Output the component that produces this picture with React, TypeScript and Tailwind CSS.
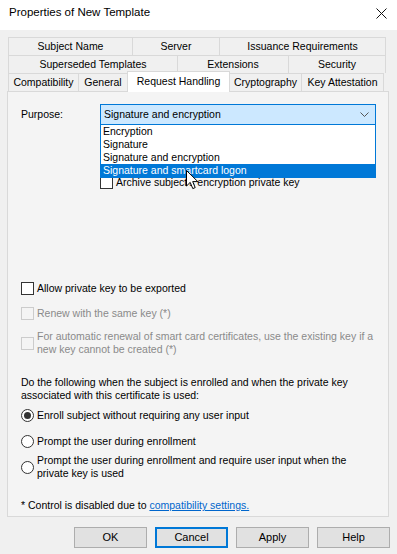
import React from 'react';

const tabRow1 = [
  { label: 'Subject Name', w: 'w-[125px]' },
  { label: 'Server', w: 'w-[88px]' },
  { label: 'Issuance Requirements', w: 'w-[167px]' },
];

const tabRow2 = [
  { label: 'Superseded Templates', w: 'w-[170px]' },
  { label: 'Extensions', w: 'w-[112px]' },
  { label: 'Security', w: 'w-[98px]' },
];

const tabRow3 = [
  { label: 'Compatibility', w: 'w-[71px]' },
  { label: 'General', w: 'w-[50px]' },
  { label: 'Request Handling', w: 'w-[103px]', active: true },
  { label: 'Cryptography', w: 'w-[73px]' },
  { label: 'Key Attestation', w: 'w-[83px]' },
];

const purposes = ['Encryption', 'Signature', 'Signature and encryption', 'Signature and smartcard logon'];

type Tab = { label: string; w: string; active?: boolean };

const TabRow: React.FC<{ tabs: Tab[] }> = ({ tabs }) => (
  <div className="flex h-[18px] items-end">
    {tabs.map((t, i) =>
      t.active ? (
        <div
          key={t.label}
          className={`${t.w} relative z-10 -mb-px -ml-px h-[21px] shrink-0 border border-b-0 border-[#d9d9d9] bg-white pt-[2px] text-center leading-[14px]`}
        >
          {t.label}
        </div>
      ) : (
        <div
          key={t.label}
          className={`${t.w} ${i > 0 ? '-ml-px' : ''} h-[18px] shrink-0 border border-b-0 border-[#d9d9d9] bg-[#f0f0f0] text-center leading-[17px]`}
        >
          {t.label}
        </div>
      )
    )}
  </div>
);

const CheckBox: React.FC<{ disabled?: boolean }> = ({ disabled }) => (
  <span
    className={`inline-block h-[13px] w-[13px] shrink-0 border ${
      disabled ? 'border-[#cccccc] bg-[#f4f4f4]' : 'border-[#333333] bg-white'
    }`}
  />
);

const Radio: React.FC<{ checked?: boolean }> = ({ checked }) => (
  <span className="flex h-[13px] w-[13px] shrink-0 items-center justify-center rounded-full border border-[#333333] bg-white">
    {checked && <span className="h-[7px] w-[7px] rounded-full bg-[#333333]" />}
  </span>
);

const App: React.FC = () => {
  return (
    <div className="relative h-[554px] w-[397px] overflow-hidden whitespace-nowrap bg-[#f0f0f0] text-[10.5px] text-black [font-family:'Liberation_Sans',Arial,sans-serif]">
      {/* title bar */}
      <div className="flex h-[30px] items-center justify-between bg-white pb-[4px] pl-[9px] pr-[10px]">
        <span className="text-[11.5px]">Properties of New Template</span>
        <svg width="11" height="11" viewBox="0 0 11 11">
          <path d="M0.5 0.5 L10.5 10.5 M10.5 0.5 L0.5 10.5" stroke="#111" strokeWidth="1" />
        </svg>
      </div>

      {/* tabs */}
      <div className="ml-[8px] mt-[7px]">
        <TabRow tabs={tabRow1} />
        <TabRow tabs={tabRow2} />
        <TabRow tabs={tabRow3} />
      </div>

      {/* tab page */}
      <div className="ml-[7px] flex h-[426px] w-[382px] flex-col border border-[#d9d9d9] bg-[#f4f4f4] pl-[13px] pr-[12px] pt-[12px]">
        <div className="flex h-[21px] items-center">
          <span className="w-[79px]">Purpose:</span>
          <div className="relative flex-1">
            <div className="flex h-[21px] items-center justify-between border border-[#0078d7] bg-[#cce8ff] pl-[3px] pr-[6px]">
              <span>Signature and encryption</span>
              <svg width="9" height="5" viewBox="0 0 9 5">
                <path d="M0.5 0.5 L4.5 4.5 L8.5 0.5" stroke="#555" strokeWidth="1" fill="none" />
              </svg>
            </div>
            <div className="absolute left-0 right-0 top-[20px] z-20 border border-[#0078d7] bg-white">
              {purposes.map((p, i) => (
                <div
                  key={p}
                  className={`h-[13px] pl-[2px] leading-[13px] ${
                    i === purposes.length - 1 ? 'bg-[#0078d7] text-white' : ''
                  }`}
                >
                  {p}
                </div>
              ))}
            </div>
            {/* mouse pointer */}
            <svg
              width="13"
              height="20"
              viewBox="0 0 13 20"
              className="absolute left-[86px] top-[66px] z-30"
            >
              <path
                d="M0.5 0.5 L0.5 16 L4.2 12.4 L6.8 18.6 L9.2 17.6 L6.7 11.6 L11.8 11.6 Z"
                fill="#fff"
                stroke="#000"
                strokeWidth="1"
                strokeLinejoin="round"
              />
            </svg>
          </div>
        </div>

        <div className="ml-[79px] mt-[51px] flex h-[13px] items-center gap-[3px] leading-[13px]">
          <CheckBox />
          <span>Archive subject's encryption private key</span>
        </div>

        <div className="mt-[93px] flex h-[13px] items-center gap-[3px] leading-[13px]">
          <CheckBox />
          <span>Allow private key to be exported</span>
        </div>

        <div className="mt-[12px] flex h-[13px] items-center gap-[3px] leading-[13px] text-[#8a8a8a]">
          <CheckBox disabled />
          <span>Renew with the same key (*)</span>
        </div>

        <div className="mt-[10px] flex items-center gap-[3px] leading-[13px] text-[#8a8a8a]">
          <CheckBox disabled />
          <span>
            For automatic renewal of smart card certificates, use the existing key if a
            <br />
            new key cannot be created (*)
          </span>
        </div>

        <div className="mt-[20px] leading-[13px]">
          Do the following when the subject is enrolled and when the private key
          <br />
          associated with this certificate is used:
        </div>

        <div className="mt-[7px] flex h-[13px] items-center gap-[3px] leading-[13px]">
          <Radio checked />
          <span>Enroll subject without requiring any user input</span>
        </div>

        <div className="mt-[13px] flex h-[13px] items-center gap-[3px] leading-[13px]">
          <Radio />
          <span>Prompt the user during enrollment</span>
        </div>

        <div className="mt-[6px] flex items-center gap-[3px] leading-[13px]">
          <Radio />
          <span>
            Prompt the user during enrollment and require user input when the
            <br />
            private key is used
          </span>
        </div>

        <div className="mt-[19px] leading-[13px]">
          * Control is disabled due to{' '}
          <a href="#" className="text-[#0066cc] underline">
            compatibility settings.
          </a>
        </div>
      </div>

      {/* buttons */}
      <div className="mr-[7px] mt-[10px] flex justify-end gap-[8px]">
        <button className="h-[21px] w-[73px] border border-[#adadad] bg-[#e1e1e1] text-[11px]">OK</button>
        <button className="h-[21px] w-[73px] border-2 border-[#0078d7] bg-[#e1e1e1] text-[11px]">Cancel</button>
        <button className="h-[21px] w-[73px] border border-[#adadad] bg-[#e1e1e1] text-[11px]">Apply</button>
        <button className="h-[21px] w-[73px] border border-[#adadad] bg-[#e1e1e1] text-[11px]">Help</button>
      </div>
    </div>
  );
};

export default App;
